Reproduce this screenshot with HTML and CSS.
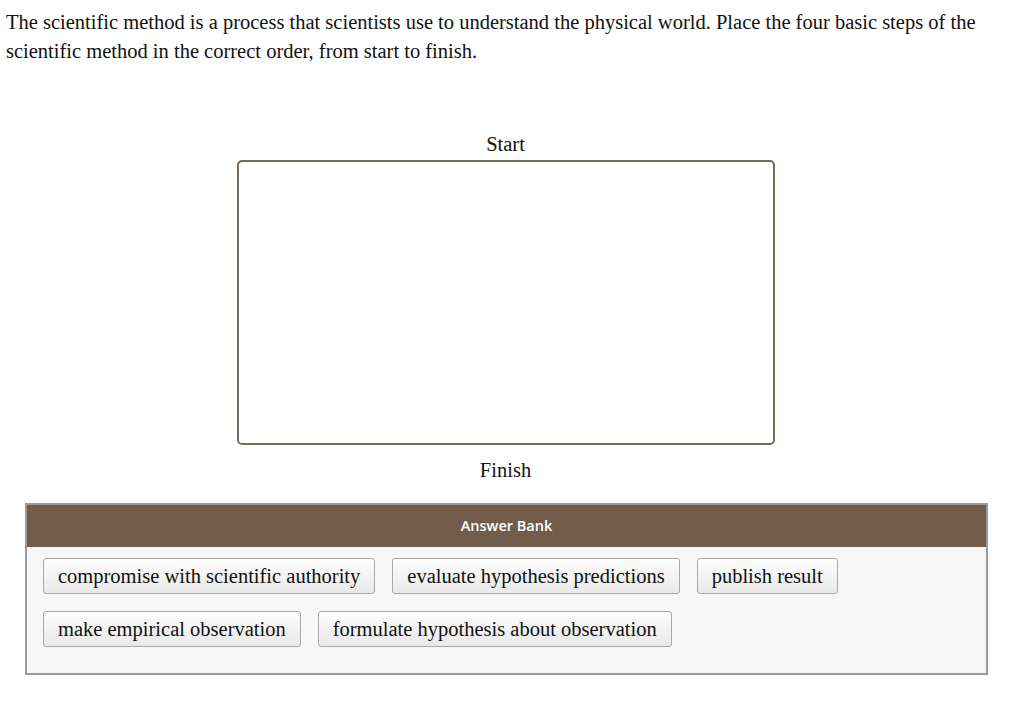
FILE: index.html
```html
<!DOCTYPE html>
<html>
<head>
<meta charset="utf-8">
<link rel="stylesheet" href="styles.css">
</head>
<body>
<p class="question">The scientific method is a process that scientists use to understand the physical world. Place the four basic steps of the scientific method in the correct order, from start to finish.</p>
<div class="sorter">
  <div class="label">Start</div>
  <div class="dropzone"></div>
  <div class="label finish">Finish</div>
</div>
<div class="bank">
  <div class="bank-head">Answer Bank</div>
  <div class="bank-body">
    <div class="chip">compromise with scientific authority</div>
    <div class="chip">evaluate hypothesis predictions</div>
    <div class="chip">publish result</div>
    <div class="chip">make empirical observation</div>
    <div class="chip">formulate hypothesis about observation</div>
  </div>
</div>
</body>
</html>
```

FILE: styles.css
```css
body {
  margin: 0;
  font-family: "Liberation Serif", "Times New Roman", serif;
  color: #111;
  background: #fff;
}
.question {
  margin: 0;
  padding: 8px 0 0 6px;
  font-size: 20.5px;
  line-height: 29px;
  width: 990px;
}
.sorter {
  margin-top: 67px;
  display: flex;
  flex-direction: column;
  align-items: center;
  padding-right: 13px;
}
.label {
  font-size: 20.5px;
  line-height: 22px;
  height: 26px;
  margin-bottom: 1px;
}
.label.finish {
  margin-top: 14px;
  margin-bottom: 0;
}
.dropzone {
  width: 534px;
  height: 281px;
  border: 2px solid #766a5e;
  border-radius: 5px;
  background: #fff;
}
.bank {
  margin: 18px 0 0 25px;
  width: 959px;
  border: 2px solid #9a9a9a;
  background: #f7f7f7;
}
.bank-head {
  background: #725d4c;
  color: #fff;
  font-family: "Open Sans", "Liberation Sans", sans-serif;
  font-weight: 600;
  font-size: 14.5px;
  text-align: center;
  height: 42px;
  line-height: 42px;
}
.bank-body {
  display: flex;
  flex-wrap: wrap;
  gap: 17px 17px;
  padding: 11px 16px 26px 16px;
}
.chip {
  box-sizing: border-box;
  height: 36px;
  line-height: 34px;
  padding: 0 14px;
  font-size: 20.5px;
  border: 1px solid #a9a9a9;
  border-radius: 3px;
  background: linear-gradient(#fdfdfd, #e9e9e9);
  color: #111;
}
```
